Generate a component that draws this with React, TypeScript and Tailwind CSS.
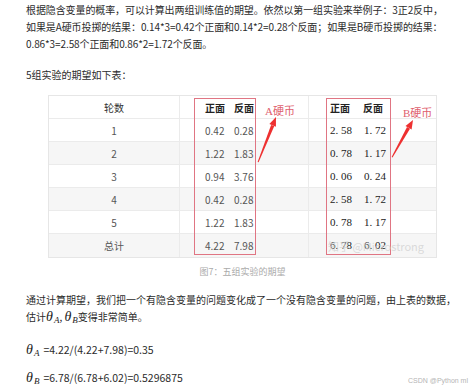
import React from "react";

const rows = [
  { n: "1", a: ["0.42", "0.28"], b: ["2. 58", "1. 72"] },
  { n: "2", a: ["1.22", "1.83"], b: ["0. 78", "1. 17"] },
  { n: "3", a: ["0.94", "3.76"], b: ["0. 06", "0. 24"] },
  { n: "4", a: ["0.42", "0.28"], b: ["2. 58", "1. 72"] },
  { n: "5", a: ["1.22", "1.83"], b: ["0. 78", "1. 17"] },
  { n: "总计", a: ["4.22", "7.98"], b: ["6. 78", "6. 02"] },
];

function Theta({ sub }: { sub: string }) {
  return (
    <span className="font-['Liberation_Serif',serif] italic text-[14px] leading-[17px] text-[#222]">
      θ<sub className="text-[9px] italic ml-[1px]">{sub}</sub>
    </span>
  );
}

export default function App() {
  return (
    <div className="relative w-[474px] h-[391px] overflow-hidden bg-white font-['Noto_Sans_CJK_SC',sans-serif] text-[#2b2b2b]">
      <div className="pl-[26px] pr-[15px] pt-[1px]">
        <p className="text-[10px] leading-[17px] tracking-[-0.1px]">
          根据隐含变量的概率，可以计算出两组训练值的期望。依然以第一组实验来举例子：3正2反中，
          <br />
          如果是A硬币投掷的结果：0.14*3=0.42个正面和0.14*2=0.28个反面；如果是B硬币投掷的结果：
          <br />
          0.86*3=2.58个正面和0.86*2=1.72个反面。
        </p>
        <p className="mt-[14px] text-[10px] leading-[17px]">5组实验的期望如下表：</p>

        <div className="mt-[12px] ml-[22px] w-[389px] border border-[#e6e6e6] text-[10px] text-[#555]">
          <div className="flex h-[23px] items-center bg-white border-b border-[#ebebeb]">
            <div className="w-[130px] text-center text-[#333]">轮数</div>
            <div className="w-[129px] h-full border-l border-[#ebebeb] flex items-center pl-[25px] font-bold text-[#222]">
              <span className="w-[29px]">正面</span>
              <span>反面</span>
            </div>
            <div className="flex-1 h-full border-l border-[#ebebeb] flex items-center pl-[21px] font-bold text-[#222]">
              <span className="w-[33px]">正面</span>
              <span>反面</span>
            </div>
          </div>
          {rows.map((r, i) => (
            <div
              key={i}
              className={`flex h-[23px] items-center ${i % 2 === 1 ? "bg-[#f6f6f6]" : "bg-white"} ${i < rows.length - 1 ? "border-b border-[#ebebeb]" : ""}`}
            >
              <div className="w-[130px] text-center">{r.n}</div>
              <div className="w-[129px] h-full border-l border-[#ebebeb] flex items-center pl-[25px]">
                <span className="w-[29px]">{r.a[0]}</span>
                <span>{r.a[1]}</span>
              </div>
              <div className="flex-1 h-full border-l border-[#ebebeb] flex items-center pl-[21px] font-['Liberation_Serif',serif] text-[11px] text-[#222]">
                <span className="w-[34px] whitespace-pre">{r.b[0]}</span>
                <span className="whitespace-pre">{r.b[1]}</span>
              </div>
            </div>
          ))}
        </div>

        <p className="mt-[7px] text-center text-[9px] leading-[14px] text-[#aaa]">图7：五组实验的期望</p>

        <p className="mt-[12px] text-[10px] leading-[17px]">
          通过计算期望，我们把一个有隐含变量的问题变化成了一个没有隐含变量的问题，由上表的数据，
          <br />
          估计<Theta sub="A" />,&nbsp;<Theta sub="B" />变得非常简单。
        </p>
        <p className="mt-[16px] text-[10.5px] leading-[17px]">
          <Theta sub="A" />
          <span className="ml-[4px]">=4.22/(4.22+7.98)=0.35</span>
        </p>
        <p className="mt-[11px] text-[10.5px] leading-[17px]">
          <Theta sub="B" />
          <span className="ml-[4px]">=6.78/(6.78+6.02)=0.5296875</span>
        </p>
      </div>

      {/* annotations */}
      <div className="absolute left-[194px] top-[98px] w-[62px] h-[157px] border border-[#e07583]" />
      <div className="absolute left-[326px] top-[98px] w-[65px] h-[157px] border border-[#e07583]" />
      <div className="absolute left-[265px] top-[103px] text-[11px] leading-[16px] text-[#e0606e] font-['Liberation_Serif','Noto_Sans_CJK_SC',serif]">A硬币</div>
      <div className="absolute left-[403px] top-[105px] text-[11px] leading-[16px] text-[#e0606e] font-['Liberation_Serif','Noto_Sans_CJK_SC',serif]">B硬币</div>
      <div className="absolute left-[328px] top-[239px] text-[11px] leading-[14px] text-[#d2d2d2]/80">知乎 @Microstrong</div>
      <div className="absolute left-[408px] top-[376px] text-[7px] leading-[10px] text-[#b5b5b5] font-['Liberation_Sans',sans-serif]">CSDN @Python ml</div>
      <svg className="absolute left-0 top-0 pointer-events-none" width="474" height="391">
        <polygon points="257.6,162 258.6,162.3 274.3,125.9 271.1,124.9" fill="#ee3030" />
        <polygon points="276,117 275.9,126.7 269.4,124.1" fill="#ee3030" />
        <polygon points="391.6,157 392.5,157.4 410,128.8 407,127" fill="#ee3030" />
        <polygon points="413,120 411.6,129.6 405.5,126.1" fill="#ee3030" />
      </svg>
    </div>
  );
}
